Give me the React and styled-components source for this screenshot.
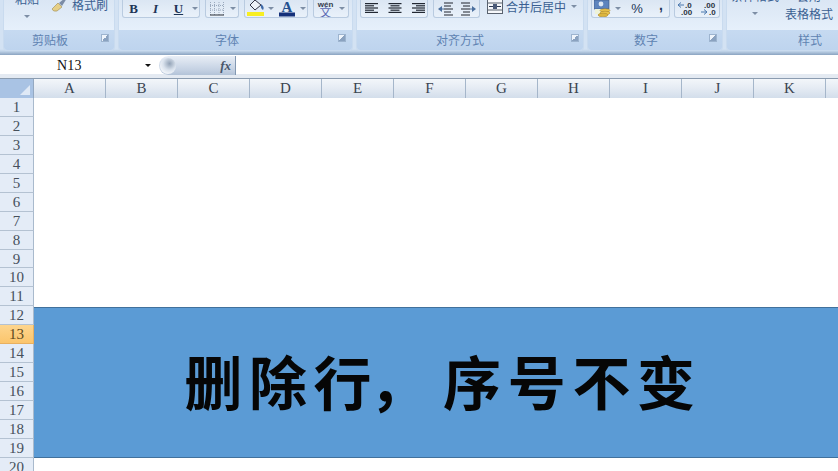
import React from "react";
import styled, { createGlobalStyle } from "styled-components";

const Global = createGlobalStyle`
  html, body { margin: 0; padding: 0; width: 838px; height: 471px; overflow: hidden; background: #fff; }
  body { font-family: "Noto Sans CJK SC", "Liberation Sans", sans-serif; }
`;

const Page = styled.div`
  width: 838px;
  height: 471px;
  overflow: hidden;
  display: flex;
  flex-direction: column;
`;

/* ---------- ribbon ---------- */
const Ribbon = styled.div`
  height: 55px;
  flex: none;
  box-sizing: border-box;
  display: flex;
  gap: 3px;
  padding: 0 0 4px 3px;
  background: linear-gradient(#d3e2f3 0, #d3e2f3 49px, #c3d6ea 51px, #8aa3c0 55px);
  overflow: hidden;
`;

const Group = styled.section`
  width: ${(p) => p.$w}px;
  flex: none;
  box-sizing: border-box;
  display: flex;
  flex-direction: column;
  border: 1px solid #c9dbef;
  border-top: 0;
  border-radius: 0 0 4px 4px;
  overflow: hidden;
  background: #dfeaf7;
`;

const Tools = styled.div`
  height: 30px;
  flex: none;
  position: relative;
  display: flex;
  align-items: flex-start;
  gap: ${(p) => p.$gap ?? 5}px;
  padding-left: ${(p) => p.$pad ?? 3}px;
  background: linear-gradient(#dae6f4, #e6f0fb);
`;

const GroupFoot = styled.div`
  height: 20px;
  flex: none;
  display: grid;
  grid-template-columns: 1fr auto;
  align-items: center;
  padding: 0 ${(p) => p.$right ?? 5}px 0 ${(p) => p.$left}px;
  background: linear-gradient(#c6daf1, #bed4ee);
  color: #5f83b2;
  font-size: 12px;
  line-height: 18px;
`;

const Launcher = styled.span`
  width: 6px;
  height: 6px;
  display: block;
  margin-top: -5px;
  border: 1px solid #9db4cf;
  background: linear-gradient(135deg, #eef4fb 50%, #8aa2c0 50%);
`;

const Strip = styled.div`
  width: ${(p) => p.$w}px;
  height: 18px;
  flex: none;
  box-sizing: border-box;
  display: flex;
  align-items: center;
  border: 1px solid #b9cbe0;
  border-top: 0;
  border-radius: 0 0 3px 3px;
  background: linear-gradient(#dbe6f3, #e9f1fa);
`;

const Cell = styled.span`
  width: ${(p) => p.$w}px;
  height: 17px;
  flex: none;
  box-sizing: border-box;
  display: flex;
  align-items: center;
  justify-content: center;
  padding-bottom: ${(p) => p.$raise ?? 0}px;
  font-family: ${(p) => (p.$serif ? '"Liberation Serif", serif' : '"Liberation Sans", sans-serif')};
  font-size: ${(p) => p.$size ?? 13}px;
  font-weight: ${(p) => (p.$bold ? 700 : 400)};
  font-style: ${(p) => (p.$italic ? "italic" : "normal")};
  text-decoration: ${(p) => (p.$under ? "underline" : "none")};
  color: #1d3557;
`;

const Arrow = styled.span`
  display: block;
  width: 0;
  height: 0;
  flex: none;
  margin: ${(p) => p.$m ?? "0 auto"};
  border-left: 3px solid transparent;
  border-right: 3px solid transparent;
  border-top: 3px solid ${(p) => p.$c ?? "#7d8ea5"};
`;

const ToolText = styled.span`
  font-size: 12px;
  line-height: 14px;
  color: #3a5f92;
  white-space: nowrap;
`;

const ClipBig = styled.div`
  width: 46px;
  flex: none;
  display: flex;
  flex-direction: column;
  align-items: center;
  margin-top: -8px;
  gap: 9px;
`;

const InlineTool = styled.div`
  display: flex;
  align-items: center;
  gap: ${(p) => p.$gap ?? 3}px;
  flex: none;
  margin-top: ${(p) => p.$top ?? 0}px;
  margin-left: ${(p) => p.$left ?? 0}px;
`;

const StyleTools = styled.div`
  display: flex;
  gap: 4px;
`;

const StyleCol = styled.div`
  display: flex;
  flex-direction: column;
  align-items: center;
  width: ${(p) => p.$w}px;
  margin-top: -11px;
  gap: ${(p) => p.$gap}px;
`;

/* ---------- formula bar ---------- */
const FormulaBar = styled.div`
  height: 24px;
  flex: none;
  box-sizing: border-box;
  display: flex;
  align-items: flex-start;
  padding-top: 1px;
  background: #fff;
  border-bottom: 1px solid #8b9cb0;
  box-shadow: inset 0 -4px 0 #e4eaf2;
`;

const NameBox = styled.div`
  width: 159px;
  height: 19px;
  flex: none;
  box-sizing: border-box;
  display: flex;
  align-items: center;
  font: 14px/19px "Liberation Serif", serif;
  color: #111;
  padding-left: 57px;
  gap: 62px;
`;

const NameText = styled.span`
  width: 26px;
  flex: none;
  letter-spacing: 0.2px;
`;

const FxPill = styled.div`
  width: 77px;
  height: 19px;
  flex: none;
  box-sizing: border-box;
  display: flex;
  align-items: center;
  justify-content: space-between;
  padding: 0 4px 0 1px;
  border-radius: 10px 0 0 10px;
  border-right: 1px solid #8398b2;
  background: linear-gradient(#e8eef6, #c3d0e2 75%, #b3c3d8);
  font: italic 700 13px "Liberation Serif", serif;
  color: #48556a;
`;

const PillKnob = styled.span`
  width: 16px;
  height: 16px;
  border-radius: 50%;
  background: radial-gradient(circle at 60% 35%, #93a3b7 0, #d8e1ec 45%, #f3f6fa 75%);
`;

/* ---------- sheet ---------- */
const ColHeader = styled.div`
  height: 19px;
  flex: none;
  display: flex;
`;

const Corner = styled.div`
  width: 34px;
  flex: none;
  box-sizing: border-box;
  position: relative;
  background: #a9c3e4;
  border-right: 1px solid #94a9c2;
  &::after {
    content: "";
    position: absolute;
    right: 3px;
    bottom: 3px;
    border-left: 10px solid transparent;
    border-bottom: 10px solid #dfe9f6;
  }
`;

const ColCell = styled.div`
  width: 72px;
  flex: none;
  box-sizing: border-box;
  text-align: center;
  font: 15px/19px "Liberation Serif", serif;
  color: #3b4450;
  border-right: 1px solid #a5b6ca;
  background: linear-gradient(#f3f6fa, #e6ecf4 45%, #d3deeb);
`;

const Body = styled.div`
  flex: 1;
  min-height: 0;
  display: flex;
`;

const RowHeader = styled.div`
  width: 34px;
  flex: none;
  display: flex;
  flex-direction: column;
`;

const RowCell = styled.div`
  height: 18.95px;
  flex: none;
  box-sizing: border-box;
  text-align: center;
  font: 15px/19px "Liberation Serif", serif;
  color: ${(p) => (p.$active ? "#5d4a20" : "#46505c")};
  border-right: 1px solid ${(p) => (p.$active ? "#e8b060" : "#a9bacd")};
  border-bottom: 1px solid ${(p) => (p.$active ? "#e8b060" : "#b4c2d2")};
  background: ${(p) => (p.$active ? "linear-gradient(#fdd58e, #fbc56c)" : "#e4ecf7")};
`;

const Sheet = styled.div`
  flex: 1;
  min-width: 0;
  display: flex;
  flex-direction: column;
`;

const Blank = styled.div`
  height: ${(p) => p.$h}px;
  flex: none;
  background: #fff;
`;

const Banner = styled.div`
  height: 151.5px;
  flex: none;
  box-sizing: border-box;
  display: flex;
  align-items: center;
  justify-content: center;
  padding: 0 0 5px 14px;
  background: #5b9bd5;
  border-top: 1px solid #41719c;
  border-bottom: 1px solid #41719c;
`;

const Title = styled.h1`
  margin: 0;
  font-family: "Noto Sans CJK SC", sans-serif;
  font-size: 58px;
  font-weight: 700;
  line-height: 70px;
  letter-spacing: 6.7px;
  color: #060606;
  white-space: nowrap;
`;

const TitleComma = styled.span`
  margin-left: -9px;
  margin-right: 9px;
`;

/* ---------- drawings ---------- */
const Brush = () => (
  <svg width="18" height="14" viewBox="0 0 18 14">
    <path d="M1 11 L7 5 L11 9 L6 13 Q2 14 1 11Z" fill="#e6cf86" stroke="#9a8a54" strokeWidth=".6" />
    <path d="M8 5 L14 0 L16 0 L11 8Z" fill="#7b8ca6" />
  </svg>
);

const BorderIcon = () => (
  <svg width="14" height="14" viewBox="0 0 14 14">
    <path d="M.5 0V13M4.5 0V13M9 0V13M13.5 0V13M0 3.5H14M0 8H14" stroke="#9aa9bd" strokeDasharray="1 1" fill="none" />
    <path d="M0 13H14" stroke="#2b2f36" strokeWidth="1.2" />
  </svg>
);

const FillIcon = () => (
  <svg width="18" height="17" viewBox="0 0 18 17">
    <path d="M8 0 L14 5 L8 10 L3 5Z" fill="#eef2f8" stroke="#334" strokeWidth="1" />
    <path d="M14 4 Q18 7 16 10 Q13 8 14 4Z" fill="#3f6aa8" />
    <rect x="0" y="12" width="17" height="4" fill="#f7ee22" />
  </svg>
);

const FontColorIcon = () => (
  <svg width="17" height="17" viewBox="0 0 17 17">
    <text x="8" y="11.5" textAnchor="middle" fontSize="15" fontWeight="700" fontFamily="Liberation Serif" fill="#24508f">A</text>
    <rect x="0" y="12.5" width="16" height="4" fill="#14307a" />
  </svg>
);

const WenIcon = () => (
  <svg width="17" height="17" viewBox="0 0 17 17">
    <text x="8.5" y="6.5" textAnchor="middle" fontSize="8" fontWeight="700" fontFamily="Liberation Sans" fill="#333c4c">wén</text>
    <text x="8.5" y="17" textAnchor="middle" fontSize="12" fontFamily="Noto Sans CJK SC" fill="#5a69b4">文</text>
  </svg>
);

const Lines = ({ mode }) => {
  const rows = [[0, 13], [0, 9], [0, 13], [0, 9], [0, 13]];
  return (
    <svg width="14" height="11" viewBox="0 0 14 11">
      {rows.map(([, len], i) => {
        const x = mode === "left" ? 0 : mode === "center" ? (14 - len) / 2 : 14 - len;
        return <rect key={i} x={x} y={i * 2.2} width={len} height="1.2" fill="#222833" />;
      })}
    </svg>
  );
};

const IndentIcon = ({ flip }) => (
  <svg width="15" height="14" viewBox="0 0 15 14" style={{ transform: flip ? "scaleX(-1)" : undefined }}>
    <path d="M6 1H15M6 4H13M6 7H15M6 10H13M6 13H15" stroke="#20252e" strokeWidth="1.1" />
    <path d="M0 7L4 4V10Z" fill="#4b6f9e" />
    <path d="M4 7H6" stroke="#4b6f9e" />
  </svg>
);

const MergeIcon = () => (
  <svg width="16" height="15" viewBox="0 0 16 15">
    <rect x=".5" y=".5" width="15" height="14" fill="#f6f8fb" stroke="#59626f" />
    <path d="M0 4H16M0 11H16" stroke="#59626f" />
    <path d="M2 7.5H6M10 7.5H14" stroke="#2c3a55" />
    <rect x="6" y="5" width="4" height="5" fill="#4a5a78" />
  </svg>
);

const CurrencyIcon = () => (
  <svg width="17" height="17" viewBox="0 0 17 17">
    <rect x="0" y="0" width="15" height="9" fill="#5d84be" stroke="#39567f" strokeWidth=".6" />
    <circle cx="7" cy="4" r="2.4" fill="#dce7f5" />
    <rect x="1" y="9" width="7" height="5" fill="#eef2d8" />
    <ellipse cx="11" cy="10.5" rx="5" ry="1.8" fill="#e8c24a" stroke="#a2802a" strokeWidth=".5" />
    <ellipse cx="11" cy="13" rx="5" ry="1.8" fill="#e8c24a" stroke="#a2802a" strokeWidth=".5" />
    <ellipse cx="9" cy="15" rx="5" ry="1.8" fill="#dcb53c" stroke="#a2802a" strokeWidth=".5" />
  </svg>
);

const Decimal = ({ top, bottom, arrowTop }) => (
  <svg width="18" height="15" viewBox="0 0 18 15">
    <path d={arrowTop ? "M0 4H6M0 4L3 1.5M0 4L3 6.5" : "M0 11H6M6 11L3 8.5M6 11L3 13.5"} stroke="#4b78ae" fill="none" />
    <text x={arrowTop ? 7 : 3} y="6.5" fontSize="8" fontWeight="700" fontFamily="Liberation Sans" fill="#2a3340">{top}</text>
    <text x={arrowTop ? 3 : 8} y="14" fontSize="8" fontWeight="700" fontFamily="Liberation Sans" fill="#2a3340">{bottom}</text>
  </svg>
);

const COLS = ["A", "B", "C", "D", "E", "F", "G", "H", "I", "J", "K", ""];
const ROWS = Array.from({ length: 20 }, (_, i) => i + 1);

export default function App() {
  return (
    <Page>
      <Global />
      <Ribbon>
        <Group $w={112}>
          <Tools $pad={0} $gap={1}>
            <ClipBig>
              <ToolText>粘贴</ToolText>
              <Arrow />
            </ClipBig>
            <InlineTool $top={-2}>
              <Brush />
              <ToolText>格式刷</ToolText>
            </InlineTool>
          </Tools>
          <GroupFoot $left={28}>
            <span>剪贴板</span>
            <Launcher />
          </GroupFoot>
        </Group>

        <Group $w={235}>
          <Tools>
            <Strip $w={78}>
              <Cell $w={21} $bold $serif>B</Cell>
              <Cell $w={23} $italic $bold $serif>I</Cell>
              <Cell $w={23} $under $bold $serif>U</Cell>
              <Arrow />
            </Strip>
            <Strip $w={34}>
              <Cell $w={21}><BorderIcon /></Cell>
              <Arrow />
            </Strip>
            <Strip $w={64}>
              <Cell $w={22}><FillIcon /></Cell>
              <Arrow />
              <Cell $w={24}><FontColorIcon /></Cell>
              <Arrow />
            </Strip>
            <Strip $w={36}>
              <Cell $w={22}><WenIcon /></Cell>
              <Arrow />
            </Strip>
          </Tools>
          <GroupFoot $left={96} $right={6}>
            <span>字体</span>
            <Launcher />
          </GroupFoot>
        </Group>

        <Group $w={228}>
          <Tools>
            <Strip $w={68}>
              <Cell $w={22}><Lines mode="left" /></Cell>
              <Cell $w={23}><Lines mode="center" /></Cell>
              <Cell $w={23}><Lines mode="right" /></Cell>
            </Strip>
            <Strip $w={47}>
              <Cell $w={23}><IndentIcon /></Cell>
              <Cell $w={23}><IndentIcon flip /></Cell>
            </Strip>
            <InlineTool $left={2} $top={-1} $gap={3}>
              <MergeIcon />
              <ToolText>合并后居中</ToolText>
              <Arrow $m="0 0 0 2px" />
            </InlineTool>
          </Tools>
          <GroupFoot $left={79} $right={4}>
            <span>对齐方式</span>
            <Launcher />
          </GroupFoot>
        </Group>

        <Group $w={136}>
          <Tools $gap={4}>
            <Strip $w={79}>
              <Cell $w={21}><CurrencyIcon /></Cell>
              <Arrow $m="0 4px 0 2px" />
              <Cell $w={24} $size={13}>%</Cell>
              <Cell $w={24} $bold $size={14} $raise={7}>,</Cell>
            </Strip>
            <Strip $w={46}>
              <Cell $w={23}><Decimal top=".0" bottom=".00" arrowTop /></Cell>
              <Cell $w={23}><Decimal top=".00" bottom=".0" /></Cell>
            </Strip>
          </Tools>
          <GroupFoot $left={46}>
            <span>数字</span>
            <Launcher />
          </GroupFoot>
        </Group>

        <Group $w={120}>
          <Tools>
            <StyleTools>
              <StyleCol $w={50} $gap={9}>
                <ToolText>条件格式</ToolText>
                <Arrow />
              </StyleCol>
              <StyleCol $w={50} $gap={4}>
                <ToolText>套用</ToolText>
                <ToolText>表格格式</ToolText>
              </StyleCol>
            </StyleTools>
          </Tools>
          <GroupFoot $left={71}>
            <span>样式</span>
          </GroupFoot>
        </Group>
      </Ribbon>

      <FormulaBar>
        <NameBox>
          <NameText>N13</NameText>
          <Arrow $m="0" $c="#111" />
        </NameBox>
        <FxPill>
          <PillKnob />
          <span>fx</span>
        </FxPill>
      </FormulaBar>

      <ColHeader>
        <Corner />
        {COLS.map((c, i) => (
          <ColCell key={i}>{c}</ColCell>
        ))}
      </ColHeader>

      <Body>
        <RowHeader>
          {ROWS.map((r) => (
            <RowCell key={r} $active={r === 13}>{r}</RowCell>
          ))}
        </RowHeader>
        <Sheet>
          <Blank $h={208.5} />
          <Banner>
            <Title>删除行<TitleComma>，</TitleComma>序号不变</Title>
          </Banner>
          <Blank $h={20} />
        </Sheet>
      </Body>
    </Page>
  );
}
